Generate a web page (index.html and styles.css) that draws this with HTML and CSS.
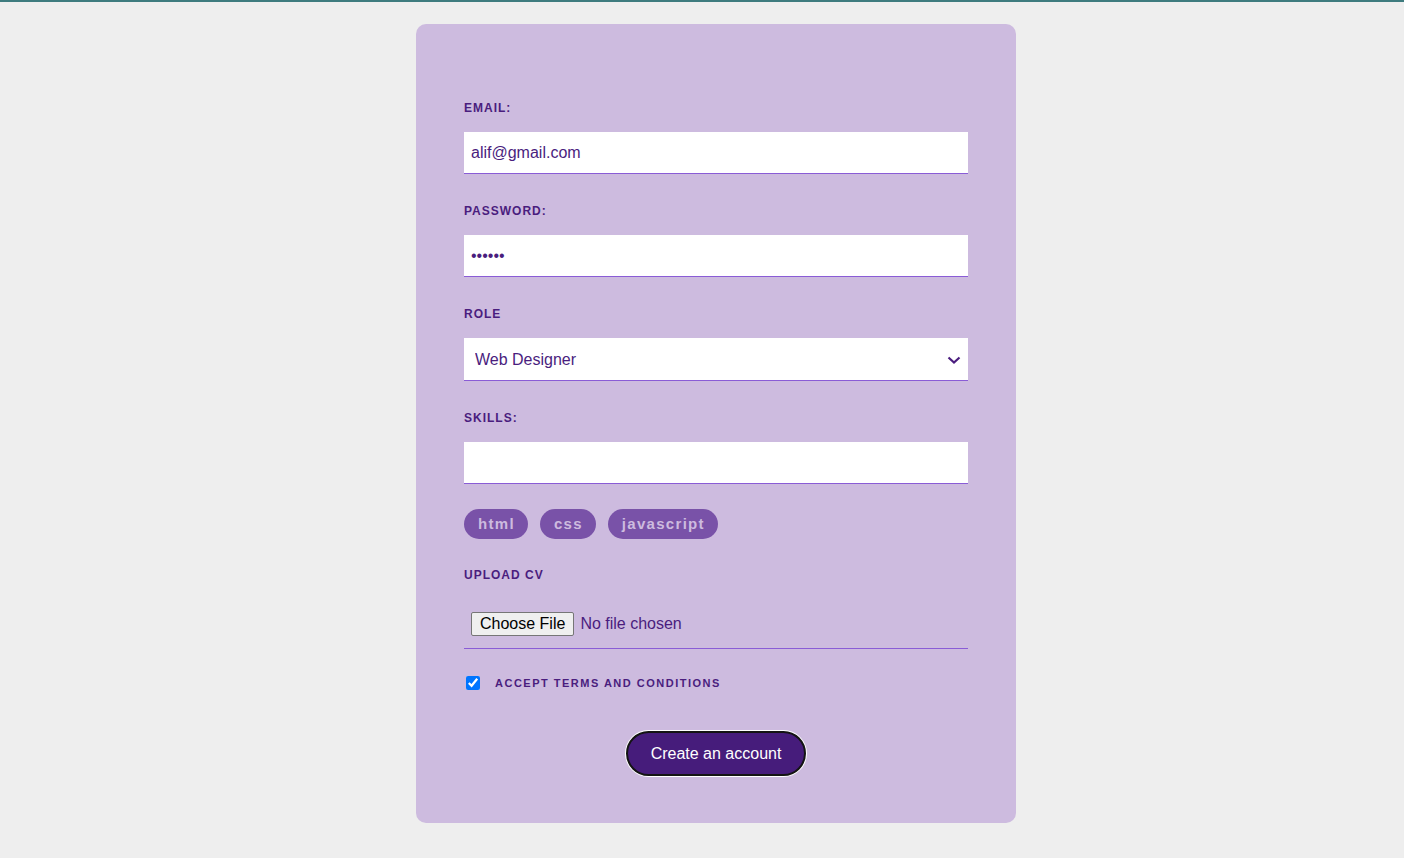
FILE: index.html
```html
<!DOCTYPE html>
<html lang="en">
<head>
<meta charset="utf-8">
<title>Create account</title>
<link rel="stylesheet" href="styles.css">
</head>
<body>
<div class="topline"></div>
<main class="page">
  <form class="card">
    <div class="field">
      <label class="lbl" for="email">Email:</label>
      <input class="inp" id="email" type="email" value="alif@gmail.com">
    </div>
    <div class="field">
      <label class="lbl" for="pw">Password:</label>
      <input class="inp" id="pw" type="password" value="123456">
    </div>
    <div class="field">
      <label class="lbl" for="role">Role</label>
      <div class="select-wrap">
        <select class="inp sel" id="role">
          <option>Web Designer</option>
          <option>Web Developer</option>
        </select>
        <svg class="chev" width="14" height="8" viewBox="0 0 14 8"><path d="M1.5 1.5 L7 6.5 L12.5 1.5" fill="none" stroke="#4a1d7e" stroke-width="2.2"/></svg>
      </div>
    </div>
    <div class="field tight">
      <label class="lbl" for="skills">Skills:</label>
      <input class="inp" id="skills" type="text">
    </div>
    <div class="tags">
      <span class="tag">html</span>
      <span class="tag">css</span>
      <span class="tag">javascript</span>
    </div>
    <div class="field upload">
      <label class="lbl" for="cv">Upload CV</label>
      <div class="filebox">
        <input class="file" id="cv" type="file">
      </div>
    </div>
    <div class="check">
      <input class="cb" id="terms" type="checkbox" checked>
      <label class="lbl cbl" for="terms">Accept terms and conditions</label>
    </div>
    <div class="actions">
      <button class="btn" type="button">Create an account</button>
    </div>
  </form>
</main>
</body>
</html>
```
FILE: styles.css
```css
* { box-sizing: border-box; }
html, body {
  margin: 0;
  padding: 0;
  background: #eeeeee;
  font-family: "Liberation Sans", Arial, sans-serif;
}
.topline {
  height: 2px;
  background: #3e7b7e;
}
.page {
  display: flex;
  justify-content: center;
  padding-top: 22px;
  padding-left: 28px;
}
.card {
  width: 600px;
  background: #cdbbdf;
  border-radius: 10px;
  padding: 77px 48px 47px;
  display: flex;
  flex-direction: column;
}
.field {
  display: flex;
  flex-direction: column;
  margin-bottom: 30px;
}
.field.tight { margin-bottom: 25px; }
.lbl {
  display: block;
  font-size: 12px;
  font-weight: bold;
  line-height: 14px;
  letter-spacing: 1px;
  text-transform: uppercase;
  color: #4a1d7e;
  margin-bottom: 17px;
}
.inp {
  width: 100%;
  height: 42px;
  border: none;
  border-bottom: 1px solid #8a5cd6;
  border-radius: 0;
  background: #ffffff;
  padding: 0 7px;
  font-family: "Liberation Sans", Arial, sans-serif;
  font-size: 16px;
  color: #4a1d7e;
  outline: none;
}
.select-wrap { position: relative; }
.sel {
  height: 43px;
  appearance: none;
  -webkit-appearance: none;
  padding: 0 30px 0 11px;
}
.chev {
  position: absolute;
  right: 7px;
  top: 18px;
  pointer-events: none;
}
.tags {
  display: flex;
  gap: 12px;
  margin-bottom: 29px;
}
.tag {
  height: 30px;
  line-height: 30px;
  padding: 0 13px 0 14px;
  border-radius: 15px;
  background: #7952a8;
  color: #cdbbdf;
  font-size: 15px;
  font-weight: bold;
  letter-spacing: 1.3px;
}
.upload { margin-bottom: 0; }
.filebox {
  border-bottom: 1px solid #8a5cd6;
  padding: 13px 7px 12px;
}
.file {
  font-family: "Liberation Sans", Arial, sans-serif;
  font-size: 16px;
  color: #4a1d7e;
  height: 24px;
}
.file::file-selector-button {
  font-family: "Liberation Sans", Arial, sans-serif;
  font-size: 16px;
  color: #000;
  background: #efefef;
  border: 1px solid #767676;
  border-radius: 2px;
  padding: 1px 8px;
  height: 24px;
  margin-right: 6px;
}
.check {
  display: flex;
  align-items: center;
  margin-top: 27px;
}
.cb {
  width: 14px;
  height: 14px;
  margin: 0 15px 0 2px;
  accent-color: #0075ff;
}
.cbl {
  margin-bottom: 0;
  font-size: 11px;
  letter-spacing: 1.5px;
}
.actions {
  display: flex;
  justify-content: center;
  margin-top: 41px;
}
.btn {
  height: 45px;
  padding: 0 23px;
  border-radius: 23px;
  border: 2px solid #141414;
  box-shadow: 0 0 0 1px #ffffff;
  background: #461c7b;
  color: #ffffff;
  font-family: "Liberation Sans", Arial, sans-serif;
  font-size: 16px;
}
```
